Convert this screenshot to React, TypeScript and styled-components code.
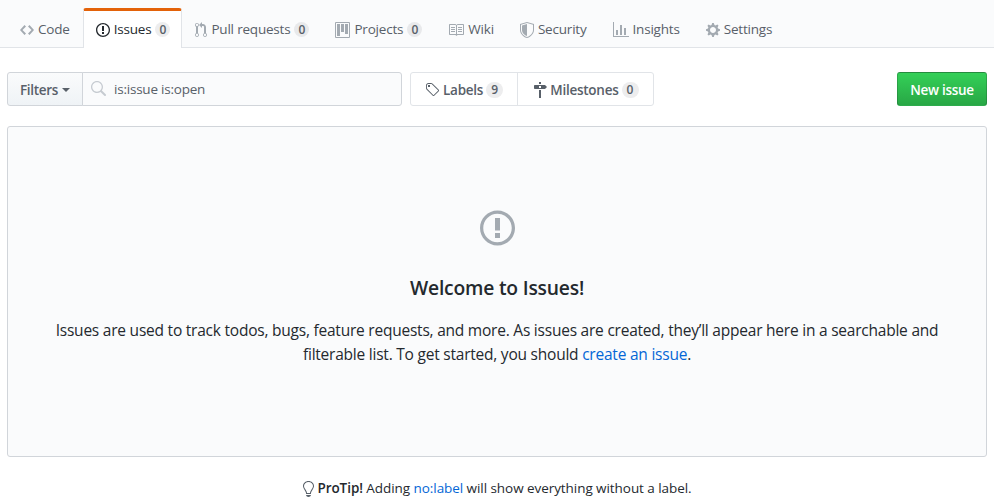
import styled, { createGlobalStyle } from 'styled-components';

const GlobalStyle = createGlobalStyle`
  html, body {
    margin: 0;
    padding: 0;
    background: #fff;
    color: #24292e;
    font-family: "Open Sans", "Noto Sans", "Liberation Sans", sans-serif;
    font-size: 14px;
  }
`;

const icons = {
  code: { w: 14, d: 'M9.5 3L8 4.5 11.5 8 8 11.5 9.5 13 14 8 9.5 3zm-5 0L0 8l4.5 5L6 11.5 2.5 8 6 4.5 4.5 3z' },
  issue: { w: 14, d: 'M7 2.3c3.14 0 5.7 2.56 5.7 5.7s-2.56 5.7-5.7 5.7A5.71 5.71 0 0 1 1.3 8c0-3.14 2.56-5.7 5.7-5.7zM7 1C3.14 1 0 4.14 0 8s3.14 7 7 7 7-3.14 7-7-3.14-7-7-7zm1 3H6v5h2V4zm0 6H6v2h2v-2z' },
  pull: { w: 12, d: 'M11 11.28V5c-.03-.78-.34-1.47-.94-2.06C9.46 2.35 8.78 2.03 8 2H7V0L4 3l3 3V4h1c.27.02.48.11.69.31.21.2.3.42.31.69v6.28A1.993 1.993 0 0 0 10 15a1.993 1.993 0 0 0 1-3.72zm-1 2.92c-.66 0-1.2-.55-1.2-1.2 0-.65.55-1.2 1.2-1.2.65 0 1.2.55 1.2 1.2 0 .65-.55 1.2-1.2 1.2zM4 3c0-1.11-.89-2-2-2a1.993 1.993 0 0 0-1 3.72v6.56A1.993 1.993 0 0 0 2 15a1.993 1.993 0 0 0 1-3.72V4.72c.59-.34 1-.98 1-1.72zm-.8 10c0 .66-.55 1.2-1.2 1.2-.65 0-1.2-.55-1.2-1.2 0-.65.55-1.2 1.2-1.2.65 0 1.2.55 1.2 1.2zM2 4.2C1.34 4.2.8 3.65.8 3c0-.65.55-1.2 1.2-1.2.65 0 1.2.55 1.2 1.2 0 .65-.55 1.2-1.2 1.2z' },
  project: { w: 15, d: 'M10 12h3V2h-3v10zm-4-2h3V2H6v8zm-4 4h3V2H2v12zm-1 1h13V1H1v14zM14 0H1a1 1 0 0 0-1 1v14a1 1 0 0 0 1 1h13a1 1 0 0 0 1-1V1a1 1 0 0 0-1-1z' },
  book: { w: 16, d: 'M3 5h4v1H3V5zm0 3h4V7H3v1zm0 2h4V9H3v1zm11-5h-4v1h4V5zm0 2h-4v1h4V7zm0 2h-4v1h4V9zm2-6v9c0 .55-.45 1-1 1H9.5l-1 1-1-1H2c-.55 0-1-.45-1-1V3c0-.55.45-1 1-1h5.5l1 1 1-1H15c.55 0 1 .45 1 1zm-8 .5L7.5 3H2v9h6V3.5zm7-.5H9.5l-.5.5V12h6V3z' },
  shield: { w: 14, d: 'M0 2l7-2 7 2v6.02C14 12.69 8.69 16 7 16c-1.69 0-7-3.31-7-7.98V2zm1 .75L7 1l6 1.75v5.268C13 12.104 8.449 15 7 15c-1.449 0-6-2.896-6-6.982V2.75zm1 .75L7 2v12c-1.207 0-5-2.482-5-5.985V3.5z' },
  graph: { w: 16, d: 'M16 14v1H0V0h1v14h15zM5 13H3V8h2v5zm4 0H7V3h2v10zm4 0h-2V6h2v7z' },
  gear: { w: 14, d: 'M14 8.77v-1.6l-1.94-.64-.45-1.09.88-1.84-1.13-1.13-1.81.91-1.09-.45-.69-1.92h-1.6l-.63 1.94-1.11.45-1.84-.88-1.13 1.13.91 1.81-.45 1.09L0 7.23v1.59l1.94.64.45 1.09-.88 1.84 1.13 1.13 1.81-.91 1.09.45.69 1.92h1.59l.63-1.94 1.11-.45 1.84.88 1.13-1.13-.92-1.81.47-1.09L14 8.75v.02zM7 11c-1.66 0-3-1.34-3-3s1.34-3 3-3 3 1.34 3 3-1.34 3-3 3z' },
  search: { w: 16, d: 'M15.7 13.3l-3.81-3.83A5.93 5.93 0 0 0 13 6c0-3.31-2.69-6-6-6S1 2.69 1 6s2.69 6 6 6c1.3 0 2.48-.41 3.47-1.11l3.83 3.81c.19.2.45.3.7.3.25 0 .52-.09.7-.3a.996.996 0 0 0 0-1.41v.01zM7 10.7c-2.59 0-4.7-2.11-4.7-4.7 0-2.59 2.11-4.7 4.7-4.7 2.59 0 4.7 2.11 4.7 4.7 0 2.59-2.11 4.7-4.7 4.7z' },
  tag: { w: 15, d: 'M7.73 1.73C7.26 1.26 6.62 1 5.96 1H3.5C2.13 1 1 2.13 1 3.5v2.47c0 .66.27 1.3.73 1.77l6.06 6.06c.39.39 1.02.39 1.41 0l4.59-4.59a.996.996 0 0 0 0-1.41L7.73 1.73zM2.38 7.09c-.31-.3-.47-.7-.47-1.13V3.5c0-.88.72-1.59 1.59-1.59h2.47c.42 0 .83.16 1.13.47l6.14 6.13-4.73 4.73-6.13-6.15zM3.01 3h2v2H3V3h.01z' },
  milestone: { w: 14, d: 'M8 2H6V0h2v2zm4 5H2c-.55 0-1-.45-1-1V4c0-.55.45-1 1-1h10l2 2-2 2zM8 4H6v2h2V4zM6 16h2V8H6v8z' },
  bulb: { w: 12, d: 'M6.5 0C3.48 0 1 2.19 1 5c0 .92.55 2.25 1 3 1.34 2.25 1.78 2.78 2 4v1h5v-1c.22-1.22.66-1.75 2-4 .45-.75 1-2.08 1-3 0-2.81-2.48-5-5.5-5zm3.64 7.48c-.25.44-.47.8-.67 1.11-.86 1.41-1.25 2.06-1.45 3.23-.02.05-.02.11-.02.17H5c0-.06 0-.13-.02-.17-.2-1.17-.59-1.83-1.45-3.23-.2-.31-.42-.67-.67-1.11C2.44 6.78 2 5.65 2 5c0-2.2 2.02-4 4.5-4 1.22 0 2.36.42 3.22 1.19C10.55 2.94 11 3.94 11 5c0 .66-.44 1.78-.86 2.48zM4 14h5c-.23 1.14-1.3 2-2.5 2s-2.27-.86-2.5-2z' },
};

type IconName = keyof typeof icons;

function Octicon({ name, height = 16, color }: { name: IconName; height?: number; color: string }) {
  const { w, d } = icons[name];
  return (
    <IconSvg viewBox={`0 0 ${w} 16`} width={(w * height) / 16} height={height} fill={color}>
      <path fillRule="evenodd" d={d} />
    </IconSvg>
  );
}

const tabs: { label: string; icon: IconName; count?: number; selected?: boolean }[] = [
  { label: 'Code', icon: 'code' },
  { label: 'Issues', icon: 'issue', count: 0, selected: true },
  { label: 'Pull requests', icon: 'pull', count: 0 },
  { label: 'Projects', icon: 'project', count: 0 },
  { label: 'Wiki', icon: 'book' },
  { label: 'Security', icon: 'shield' },
  { label: 'Insights', icon: 'graph' },
  { label: 'Settings', icon: 'gear' },
];

function App() {
  return (
    <>
      <GlobalStyle />
      <Page>
        <TabBar>
          {tabs.map((tab) => (
            <Tab key={tab.label} $selected={tab.selected}>
              <Octicon name={tab.icon} color={tab.selected ? '#24292e' : '#a3aab1'} />
              <TabLabel>{tab.label}</TabLabel>
              {tab.count !== undefined && <Counter>{tab.count}</Counter>}
            </Tab>
          ))}
        </TabBar>

        <Content>
          <Toolbar>
            <FilterGroup>
              <FilterButton>
                Filters
                <Caret />
              </FilterButton>
              <SearchField>
                <Octicon name="search" color="#c6cbd1" />
                is:issue is:open
              </SearchField>
            </FilterGroup>

            <LinkGroup>
              <LinkItem>
                <Octicon name="tag" color="#586069" />
                Labels
                <Counter $large>9</Counter>
              </LinkItem>
              <LinkItem>
                <Octicon name="milestone" color="#586069" />
                Milestones
                <Counter $large>0</Counter>
              </LinkItem>
            </LinkGroup>

            <NewIssue>New issue</NewIssue>
          </Toolbar>

          <Blankslate>
            <Octicon name="issue" height={40} color="#a3aab1" />
            <Title>Welcome to Issues!</Title>
            <Lead>
              Issues are used to track todos, bugs, feature requests, and more. As issues are
              created, they’ll appear here in a searchable and filterable list. To get started, you
              should <TextLink>create an issue</TextLink>.
            </Lead>
          </Blankslate>

          <Tip>
            <Octicon name="bulb" color="#586069" />
            <span>
              <strong>ProTip!</strong> Adding <TextLink>no:label</TextLink> will show everything
              without a label.
            </span>
          </Tip>
        </Content>
      </Page>
    </>
  );
}

const Page = styled.div`
  width: 994px;
  height: 503px;
  overflow: hidden;
`;

const IconSvg = styled.svg`
  flex: none;
  display: inline-block;
`;

const TabBar = styled.nav`
  box-sizing: border-box;
  height: 48px;
  padding: 8px 0 0 7px;
  display: flex;
  align-items: stretch;
  background: #fafbfc;
  border-bottom: 1px solid #e1e4e8;
`;

const Tab = styled.a<{ $selected?: boolean }>`
  box-sizing: border-box;
  height: 40px;
  padding: ${(p) => (p.$selected ? '0 11px 0 12px' : '0 12px')};
  display: flex;
  align-items: center;
  gap: 4px;
  font-size: 13.5px;
  letter-spacing: -0.2px;
  color: ${(p) => (p.$selected ? '#24292e' : '#586069')};
  background: ${(p) => (p.$selected ? '#fff' : 'transparent')};
  border: 1px solid ${(p) => (p.$selected ? '#e1e4e8' : 'transparent')};
  border-top: ${(p) => (p.$selected ? '3px solid #e36209' : '3px solid transparent')};
  border-bottom: 0;
  border-radius: 3px 3px 0 0;
`;

const TabLabel = styled.span`
  margin-top: -2px;
`;

const Counter = styled.span<{ $large?: boolean }>`
  box-sizing: border-box;
  width: ${(p) => (p.$large ? '17px' : '15px')};
  height: ${(p) => (p.$large ? '16px' : '15px')};
  display: flex;
  align-items: center;
  justify-content: center;
  font-size: 12px;
  font-weight: 600;
  letter-spacing: 0;
  line-height: 1;
  color: #586069;
  background: rgba(27, 31, 35, 0.08);
  border-radius: 20px;
`;

const Content = styled.main`
  padding: 24px 7px 0;
`;

const Toolbar = styled.div`
  display: flex;
  align-items: stretch;
  height: 34px;
`;

const FilterGroup = styled.div`
  width: 395px;
  display: flex;
`;

const FilterButton = styled.button`
  box-sizing: border-box;
  width: 76px;
  display: flex;
  align-items: center;
  justify-content: center;
  gap: 4px;
  padding: 1px 0 0;
  font: 600 13.5px "Open Sans", sans-serif;
  letter-spacing: -0.3px;
  color: #586069;
  background: linear-gradient(#fafbfc, #eff3f6);
  border: 1px solid #d1d5da;
  border-radius: 3px 0 0 3px;
`;

const Caret = styled.span`
  width: 0;
  height: 0;
  border: 4px solid transparent;
  border-top-color: #586069;
  border-bottom: 0;
`;

const SearchField = styled.div`
  box-sizing: border-box;
  flex: 1;
  margin-left: -1px;
  padding: 0 0 0 7px;
  display: flex;
  align-items: center;
  gap: 8px;
  font-size: 13.5px;
  letter-spacing: -0.22px;
  color: #586069;
  background: #fafbfc;
  border: 1px solid #d1d5da;
  border-radius: 0 3px 3px 0;
`;

const LinkGroup = styled.div`
  margin-left: 8px;
  display: flex;
  border: 1px solid #e1e4e8;
  border-radius: 3px;
`;

const LinkItem = styled.a`
  padding: 1px 14px 0 15px;
  display: flex;
  align-items: center;
  gap: 3px;
  font-weight: 600;
  font-size: 13.5px;
  letter-spacing: -0.25px;
  color: #586069;
  &:first-child {
    padding-left: 14px;
  }
  & + & {
    border-left: 1px solid #e1e4e8;
  }
`;

const NewIssue = styled.button`
  box-sizing: border-box;
  margin-left: auto;
  width: 90px;
  padding: 1px 0 0;
  font: 600 13.5px "Open Sans", sans-serif;
  letter-spacing: -0.28px;
  color: #fff;
  background: linear-gradient(#34d058, #28a745);
  border: 1px solid rgba(27, 31, 35, 0.2);
  border-radius: 3px;
`;

const Blankslate = styled.section`
  box-sizing: border-box;
  height: 331px;
  margin-top: 20px;
  padding: 81px 40px 0;
  display: flex;
  flex-direction: column;
  align-items: center;
  text-align: center;
  background: #fafbfc;
  border: 1px solid #d1d5da;
  border-radius: 3px;
`;

const Title = styled.h3`
  margin: 25px 0 0;
  font-size: 19.3px;
  line-height: 30px;
  font-weight: 600;
  letter-spacing: -0.2px;
`;

const Lead = styled.p`
  margin: 15px 0 0;
  font-size: 15.5px;
  line-height: 24px;
  letter-spacing: -0.225px;
`;

const TextLink = styled.a`
  color: #0366d6;
`;

const Tip = styled.div`
  margin-top: 21px;
  display: flex;
  align-items: center;
  justify-content: center;
  gap: 3px;
  font-size: 13.5px;
  line-height: 21px;
  letter-spacing: -0.06px;
  color: #24292e;
  strong {
    font-weight: 600;
  }
`;

export default App;
